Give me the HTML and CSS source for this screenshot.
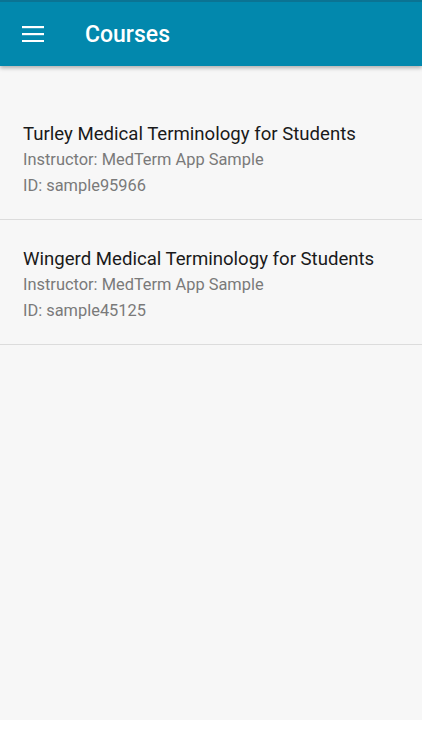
FILE: index.html
```html
<!DOCTYPE html>
<html lang="en">
<head>
  <meta charset="UTF-8">
  <meta name="viewport" content="width=device-width, initial-scale=1.0">
  <title>Courses</title>
  <link rel="stylesheet" href="styles.css">
</head>
<body>
  <div class="app">
    <header class="toolbar">
      <button class="menu-btn" aria-label="Menu">
        <svg width="22" height="16" viewBox="0 0 22 16">
          <rect x="0" y="0" width="22" height="2.2" fill="#fff"/>
          <rect x="0" y="7" width="22" height="2.2" fill="#fff"/>
          <rect x="0" y="14" width="22" height="2.2" fill="#fff"/>
        </svg>
      </button>
      <h1 class="toolbar-title">Courses</h1>
    </header>

    <main class="course-list">
      <div class="course">
        <div class="course-name">Turley Medical Terminology for Students</div>
        <div class="course-meta">Instructor: MedTerm App Sample</div>
        <div class="course-meta">ID: sample95966</div>
      </div>
      <div class="course">
        <div class="course-name">Wingerd Medical Terminology for Students</div>
        <div class="course-meta">Instructor: MedTerm App Sample</div>
        <div class="course-meta">ID: sample45125</div>
      </div>
    </main>
  </div>
</body>
</html>
```

FILE: styles.css
```css
body {
  margin: 0;
  background: #fff;
  font-family: Roboto, "Noto Sans", sans-serif;
}

.app {
  height: 720px;
  background: #f7f7f7;
  display: flex;
  flex-direction: column;
}

.toolbar {
  height: 66px;
  box-sizing: border-box;
  background: #0288ad;
  border-top: 2px solid #0b7393;
  display: flex;
  align-items: center;
  padding: 0 0 0 22px;
  box-shadow: 0 2px 4px rgba(0, 0, 0, 0.3);
  position: relative;
  z-index: 1;
}

.menu-btn {
  background: none;
  border: none;
  padding: 0;
  margin: 0;
  width: 22px;
  height: 16px;
  display: flex;
}

.toolbar-title {
  margin: 0 0 0 41px;
  color: #fff;
  font-size: 23px;
  font-weight: 500;
}

.course-list {
  padding-top: 29px;
}

.course {
  padding: 26px 23px 20px;
  border-bottom: 1px solid #dcdcdc;
}

.course-name {
  font-size: 18.6px;
  line-height: 26px;
  color: #1a1a1a;
}

.course-meta {
  font-size: 16.4px;
  line-height: 26px;
  color: #7a7a7a;
}
```
